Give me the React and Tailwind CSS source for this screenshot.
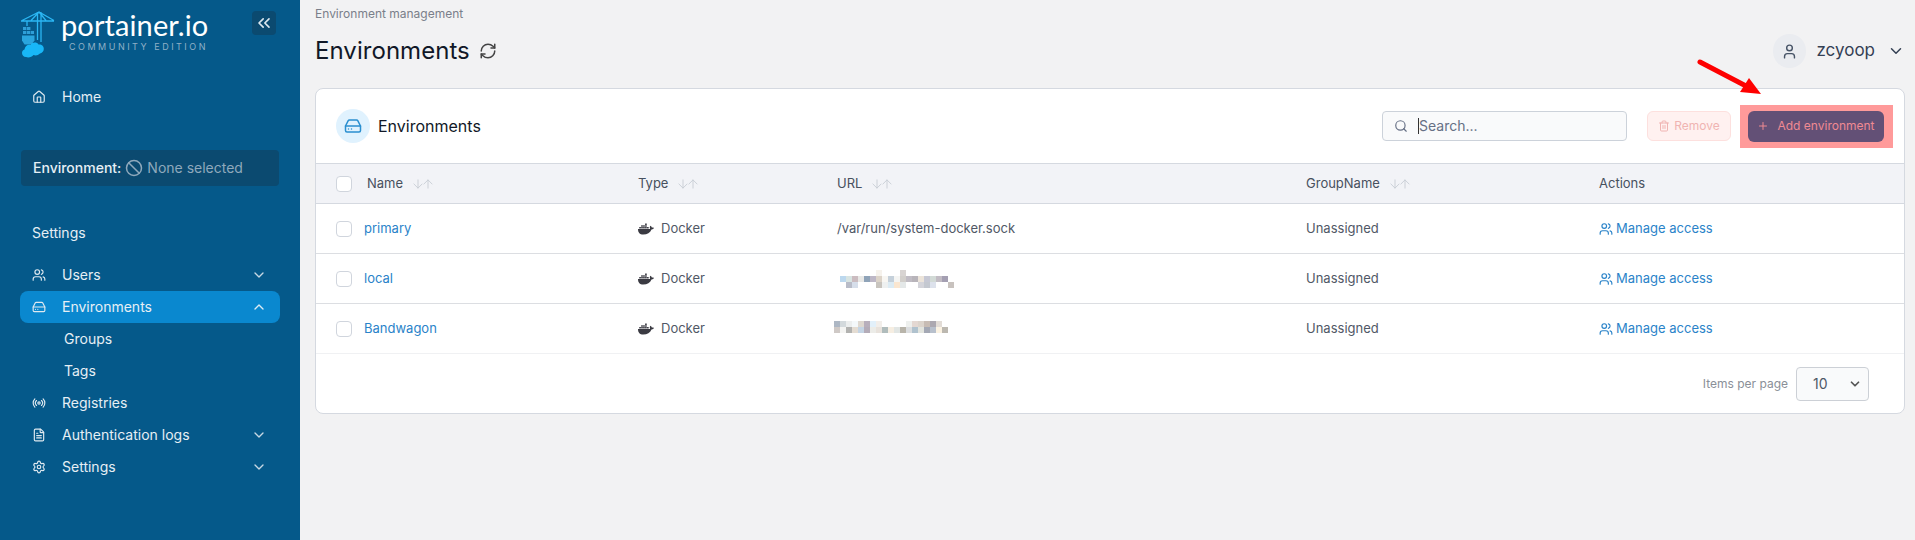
import { Home, Ban, Users, HardDrive, Radio, FileText, Settings, ChevronDown, ChevronUp, ChevronsLeft, RefreshCw, User, Search, Trash2, Plus, ArrowDown, ArrowUp } from 'lucide-react';
import { FaDocker } from 'react-icons/fa';

const rows = [
  { name: 'primary', url: '/var/run/system-docker.sock' },
  { name: 'local', blur: 1 },
  { name: 'Bandwagon', blur: 2 },
];

// pixelated parts of the two hidden urls: [x, y, colour]
const blurOne = [
  [0, 6, '#bcd8ee'], [6, 6, '#d8e4e2'], [12, 6, '#cbbcc0'], [18, 6, '#e8e8e6'], [24, 6, '#8fa3b8'], [30, 6, '#bdb7c6'], [36, 6, '#dcd3c8'], [42, 6, '#f8f6f2'], [48, 6, '#c5d0da'], [54, 6, '#f5f5f3'], [60, 6, '#d2cfcb'], [66, 6, '#c0bcc4'], [72, 6, '#b8b4ba'], [78, 6, '#ece4da'], [84, 6, '#c6c8d4'], [90, 6, '#d2dad6'], [96, 6, '#c2bcc4'], [102, 6, '#a49fb2'],
  [36, 0, '#f6f2ec'], [60, 0, '#d8d4d2'],
  [6, 12, '#b8bcc8'], [12, 12, '#d6deea'], [36, 12, '#c8c4be'], [42, 12, '#eef0f0'], [48, 12, '#dcebf4'], [54, 12, '#fae6d0'], [60, 12, '#e4e8e8'], [78, 12, '#d4d4da'], [84, 12, '#c4c8d0'], [90, 12, '#dde2ec'], [108, 12, '#c8c2be'],
];
const blurTwo = [
  [0, 0, '#adb7c4'], [6, 0, '#d3d9dc'], [12, 0, '#eceeee'], [18, 0, '#f4f8fa'], [24, 0, '#ded8d0'], [30, 0, '#b8afbc'], [36, 0, '#e2f0fa'], [42, 0, '#f2eeea'], [72, 0, '#eef0ee'], [78, 0, '#e4d8d2'], [84, 0, '#dcd4cc'], [90, 0, '#c8bcb4'], [96, 0, '#aca8b0'], [102, 0, '#e2dcd6'],
  [0, 6, '#cfc9c6'], [6, 6, '#f4f4f2'], [12, 6, '#b2b2b0'], [18, 6, '#e4dcd2'], [24, 6, '#c4d4e4'], [30, 6, '#b4acb8'], [36, 6, '#ecece8'], [42, 6, '#e8e2dc'], [48, 6, '#b0bcbc'], [54, 6, '#f6eee2'], [60, 6, '#e2e6e4'], [66, 6, '#b8b4aa'], [72, 6, '#dcdee0'], [78, 6, '#b0c2ce'], [84, 6, '#e2e4de'], [90, 6, '#a4a8b4'], [96, 6, '#b8c0cc'], [102, 6, '#fbf2e2'], [108, 6, '#bcb8b0'],
];

function Mosaic({ cells, className }) {
  return (
    <svg width="114" height="18" viewBox="0 0 114 18" className={className}>
      {cells.map(([x, y, c], i) => <rect key={i} x={x} y={y} width="6" height="6" fill={c} />)}
    </svg>
  );
}

function Logo() {
  return (
    <svg width="36" height="50" viewBox="19 10 36 50" className="shrink-0">
      <g stroke="#2bb6f3" strokeWidth="1.3" fill="none">
        <path d="M20 21h33M21 20.500 38 12l15 8.500M36.500 12v28M40 12v30M26 21v5M38 12l-8 8.500M38 12l7 8.500" />
      </g>
      <g fill="#2e9fd8">
        <rect x="22" y="27" width="3.400" height="3" /><rect x="26" y="27" width="3.400" height="3" />
        <rect x="22" y="31" width="3.400" height="3" /><rect x="26" y="31" width="3.400" height="3" />
        <rect x="30" y="31" width="3" height="3" />
      </g>
      <path d="M21 35.500h12.500v5l-3 4h-7l-2.500-4z" fill="#2aa5de" />
      <path d="M25 57c-2.500 0-4-2-4-4 0-1.800 1-3 2.500-3.500C24 46 27 44 29.500 45c1.500-3 6.500-3.200 8-.5 3-.5 5.500 1.800 5.300 4.500 0 2.800-2 4-3.800 4.500-2 2-4.500 2.500-6.500 1.500-1.500 2-5 3-7.500 2z" fill="#18b7f7" />
    </svg>
  );
}

function NavItem({ icon: Icon, label, chevron, active, sub }) {
  return (
    <div className={`flex h-8 items-center rounded-lg pr-[13px] text-sm text-[#e6eff5] ${active ? 'bg-[#0a88cf]' : ''} ${sub ? 'pl-[44px]' : 'pl-3'}`}>
      {Icon && <Icon size={14} strokeWidth={2} className="mr-4 text-[#dfe9f0]" />}
      <span>{label}</span>
      {chevron === 'down' && <ChevronDown size={16} className="ml-auto text-[#c8d8e4]" />}
      {chevron === 'up' && <ChevronUp size={16} className="ml-auto text-[#dcebf5]" />}
    </div>
  );
}

function Sidebar() {
  return (
    <aside className="w-[300px] shrink-0 bg-[#05598a] px-5 text-white">
      <div className="flex h-[81px] items-start pt-[10px]">
        <Logo />
        <div className="ml-[5px] w-[152px]">
          <div className="font-['Lato',sans-serif] text-[29px] leading-[30px] tracking-[0.1px] text-white">portainer.io</div>
          <div className="ml-[8px] mt-[3px] whitespace-nowrap text-[9px] leading-[8px] tracking-[2.5px] text-[#8fb0c6]">COMMUNITY EDITION</div>
        </div>
        <button className="ml-auto mr-1 mt-px flex h-6 w-6 items-center justify-center rounded bg-[#0b4a70] text-[#dbe7ef]">
          <ChevronsLeft size={20} />
        </button>
      </div>
      <NavItem icon={Home} label="Home" />
      <div className="mx-px mt-[37px] flex h-9 items-center rounded bg-[#0b4a70] pl-3 text-sm">
        <span className="font-medium text-[#e6eff5]">Environment:</span>
        <Ban size={18} className="mx-1 text-[#8fa9bc]" />
        <span className="text-[#8fa9bc]">None selected</span>
      </div>
      <div className="mb-4 mt-[37px] pl-3 text-sm leading-5 text-[#e6eff5]">Settings</div>
      <NavItem icon={Users} label="Users" chevron="down" />
      <NavItem icon={HardDrive} label="Environments" chevron="up" active />
      <NavItem label="Groups" sub />
      <NavItem label="Tags" sub />
      <NavItem icon={Radio} label="Registries" />
      <NavItem icon={FileText} label="Authentication logs" chevron="down" />
      <NavItem icon={Settings} label="Settings" chevron="down" />
    </aside>
  );
}

function SortHead({ label }) {
  return (
    <div className="flex items-center text-[13px] text-[#47505e]">
      {label}
      <span className="ml-2 flex text-[#c6ccd4]">
        <ArrowDown size={14} strokeWidth={1.5} className="-mr-[4px]" />
        <ArrowUp size={14} strokeWidth={1.5} />
      </span>
    </div>
  );
}

const gridCols = 'grid grid-cols-[322px_199px_469px_293px_1fr] items-center';

function EnvTable() {
  return (
    <div className="rounded-lg border border-[#d5d9e0] bg-white">
      <div className="flex h-[75px] items-center border-b border-[#d5d9e0] pl-5 pr-[11px]">
        <div className="flex h-[34px] w-[34px] items-center justify-center rounded-full bg-[#e0f2fe]">
          <HardDrive size={18} className="text-[#2a8fd0]" />
        </div>
        <span className="ml-2 text-base text-[#111827]">Environments</span>
        <div className="ml-auto flex h-[30px] w-[245px] items-center rounded border border-[#ccd2da] bg-[#f9fafb] pl-[11px] text-sm text-[#667085]">
          <Search size={14} />
          <span className="ml-[10px] border-l border-[#333] leading-4">Search...</span>
        </div>
        <button className="ml-5 flex h-[30px] w-[84px] items-center justify-center rounded-md border border-[#fde0de] bg-[#fff1f0] text-xs text-[#f0b4b2]">
          <Trash2 size={12} className="mr-1" />Remove
        </button>
        <div className="ml-[9px] bg-[#ff9a9a] py-[6px] pl-2 pr-[9px]">
          <button className="flex h-[31px] w-[136px] items-center justify-center rounded-md bg-[#635076] text-xs text-[#f08a92]">
            <Plus size={12} className="mr-2" />Add environment
          </button>
        </div>
      </div>
      <div className={`${gridCols} h-[40px] border-b border-[#d5d9e0] bg-[#f2f3f7]`}>
        <div className="flex items-center pl-5">
          <span className="mr-[15px] h-4 w-4 rounded border border-[#d0d5dd] bg-white" />
          <SortHead label="Name" />
        </div>
        <SortHead label="Type" />
        <SortHead label="URL" />
        <SortHead label="GroupName" />
        <div className="text-[13px] text-[#47505e]">Actions</div>
      </div>
      {rows.map((r, i) => (
        <div key={r.name} className={`${gridCols} h-[50px] border-b text-[13px] text-[#505866] ${i === 2 ? 'border-[#f0f1f3]' : 'border-[#dcdee2]'}`}>
          <div className="flex items-center pl-5">
            <span className="mr-3 h-4 w-4 rounded border border-[#d0d5dd] bg-white" />
            <a className="text-[#2a83c9]">{r.name}</a>
          </div>
          <div className="flex items-center">
            <FaDocker size={16} className="mr-[7px] text-[#3a3a42]" />Docker
          </div>
          <div className="flex items-center">
            {r.url}
            {r.blur === 1 && <Mosaic cells={blurOne} className="ml-[3px]" />}
            {r.blur === 2 && <Mosaic cells={blurTwo} className="-ml-[3px] mt-[3px]" />}
          </div>
          <div>Unassigned</div>
          <a className="flex items-center text-[#2a83c9]">
            <Users size={14} className="mr-[3px]" />Manage access
          </a>
        </div>
      ))}
      <div className="flex h-[59px] items-center justify-end pr-[35px]">
        <span className="text-xs text-[#8a8f98]">Items per page</span>
        <div className="ml-2 flex h-[34px] w-[73px] items-center justify-between rounded border border-[#ccd0d6] bg-[#f9fafb] pl-4 pr-[6px] text-sm text-[#505866]">
          10
          <ChevronDown size={14} strokeWidth={3} className="text-[#555]" />
        </div>
      </div>
    </div>
  );
}

export default function App() {
  return (
    <div className="relative flex h-[540px] w-[1915px] overflow-hidden bg-[#f2f2f3] font-['Inter',sans-serif]">
      <Sidebar />
      <main className="flex-1 pl-[15px] pr-[10px]">
        <div className="pt-[6px] text-xs leading-4 text-[#7a7f8a]">Environment management</div>
        <div className="mt-[11px] flex h-[36px] items-center">
          <h1 className="text-2xl tracking-[0.05px] text-[#111827]">Environments</h1>
          <RefreshCw size={18} className="ml-[9px] text-[#444]" />
          <div className="ml-auto flex items-center">
            <span className="flex h-[34px] w-[33px] items-center justify-center rounded-full bg-[#eaecf0]">
              <User size={17} className="text-[#475467]" />
            </span>
            <span className="ml-[10px] text-[17px] text-[#344054]">zcyoop</span>
            <ChevronDown size={18} className="ml-[12px] text-[#344054]" />
          </div>
        </div>
        <div className="mt-[19px]">
          <EnvTable />
        </div>
      </main>
      {/* red annotation arrow */}
      <svg className="pointer-events-none absolute left-[1690px] top-[55px]" width="80" height="45" viewBox="1690 55 80 45">
        <path d="M1700 62 1746 86" stroke="#fe0000" strokeWidth="5" strokeLinecap="round" />
        <path d="M1761 94 1740 92 1749 78z" fill="#fe0000" />
      </svg>
    </div>
  );
}
